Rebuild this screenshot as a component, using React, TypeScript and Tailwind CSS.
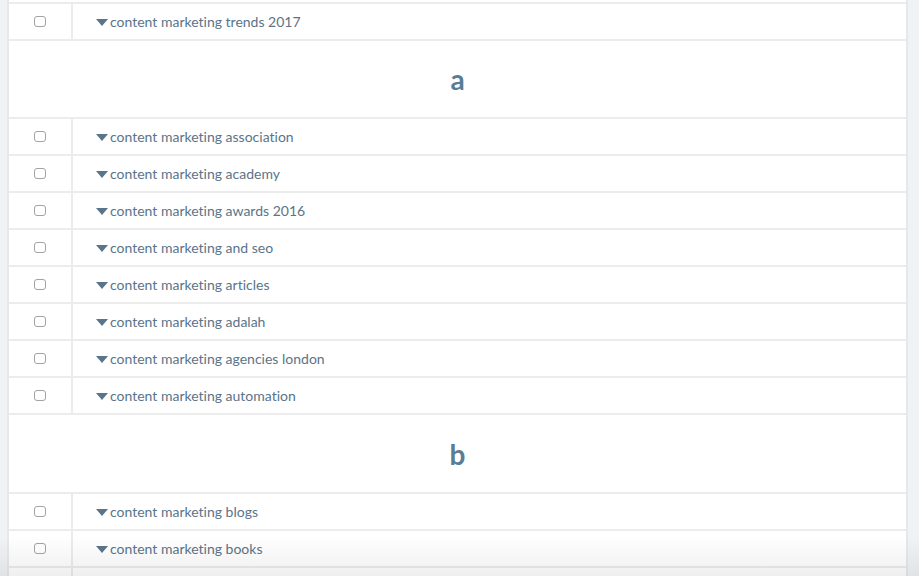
import { Fragment } from 'react';

const groups: { label?: string; tall?: boolean; items: string[] }[] = [
    { items: ['content marketing trends 2017'] },
    {
        label: 'a',
        items: [
            'content marketing association',
            'content marketing academy',
            'content marketing awards 2016',
            'content marketing and seo',
            'content marketing articles',
            'content marketing adalah',
            'content marketing agencies london',
            'content marketing automation',
        ],
    },
    { label: 'b', tall: true, items: ['content marketing blogs', 'content marketing books', ''] },
];

function Row({ text }: { text: string }) {
    return (
        <div className="flex h-[37px] border-b-2 border-[#ececec]">
            <div className="w-[64px] shrink-0 flex items-center justify-center border-r-2 border-[#ececec]">
                {text && (
                    <span className="block w-[12px] h-[11px] rounded-[3px] border border-[#a3a3a3] bg-white" />
                )}
            </div>
            {text && (
                <div className="flex items-center pl-[23px] text-[14px] text-[#5a7489] [font-variant-ligatures:none]">
                    <svg width="12" height="7" viewBox="0 0 12 7" className="mr-[2px] mt-[1px]">
                        <path d="M0 0 H12 L6 7 Z" fill="#5a7489" />
                    </svg>
                    <span>{text}</span>
                </div>
            )}
        </div>
    );
}

export default function App() {
    return (
        <div
            className="relative h-[576px] w-[919px] overflow-hidden bg-[#f1f2f4]"
            style={{ fontFamily: 'Lato, "Open Sans", sans-serif' }}
        >
            <div className="ml-[7px] w-[901px] border-l-2 border-r-2 border-[#e6e9ec] bg-white">
                <div className="h-[4px] border-b-2 border-[#ececec]" />
                {groups.map((g, i) => (
                    <Fragment key={i}>
                        {g.label && (
                            <div
                                className={`flex items-center justify-center border-b-2 border-[#ececec] ${
                                    g.tall ? 'h-[79px]' : 'h-[78px]'
                                }`}
                            >
                                <span className="text-[28px] font-bold text-[#5a7d96]">{g.label}</span>
                            </div>
                        )}
                        {g.items.map((t, j) => (
                            <Row key={j} text={t} />
                        ))}
                    </Fragment>
                ))}
            </div>
            {/* soft shade at the bottom edge */}
            <div className="pointer-events-none absolute bottom-0 left-0 right-0 h-[40px] bg-gradient-to-b from-transparent to-[#00000010]" />
        </div>
    );
}
